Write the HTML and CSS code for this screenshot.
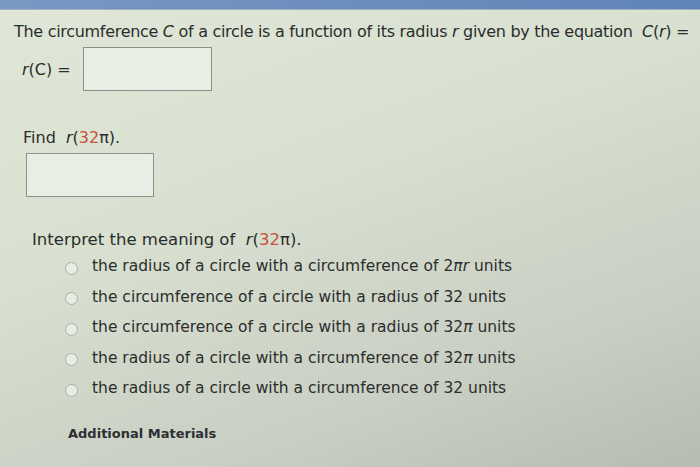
FILE: index.html
```html
<!DOCTYPE html>
<html>
<head>
<meta charset="utf-8">
<link rel="stylesheet" href="styles.css">
</head>
<body>
<div class="topbar"></div>
<div class="page">
  <p class="intro">The circumference <i>C</i> of a circle is a function of its radius <i>r</i> given by the equation&nbsp; <i>C</i>(<i>r</i>) =</p>
  <div class="eqrow">
    <span class="lbl"><i>r</i>(C) =</span>
    <div class="box box1"></div>
  </div>
  <p class="find">Find&nbsp;&nbsp;<i>r</i>(<span class="red">32</span>π).</p>
  <div class="box box2"></div>
  <p class="interp">Interpret the meaning of&nbsp; <i>r</i>(<span class="red">32</span>π).</p>
  <ul class="opts">
    <li><span class="radio"></span><span class="txt">the radius of a circle with a circumference of 2<i>πr</i> units</span></li>
    <li><span class="radio"></span><span class="txt">the circumference of a circle with a radius of 32 units</span></li>
    <li><span class="radio"></span><span class="txt">the circumference of a circle with a radius of 32<i>π</i> units</span></li>
    <li><span class="radio"></span><span class="txt">the radius of a circle with a circumference of 32<i>π</i> units</span></li>
    <li><span class="radio"></span><span class="txt">the radius of a circle with a circumference of 32 units</span></li>
  </ul>
  <p class="addl">Additional Materials</p>
</div>
</body>
</html>
```
FILE: styles.css
```css
html, body {
  margin: 0;
  padding: 0;
}
body {
  width: 700px;
  height: 467px;
  overflow: hidden;
  font-family: "DejaVu Sans", Verdana, sans-serif;
  color: #2b2d2c;
  background: linear-gradient(160deg, #e0e7d8 0%, #d8e0d0 40%, #c9cfc3 75%, #b7bcb1 100%);
}
.topbar {
  height: 9px;
  background: linear-gradient(90deg, #7a98c2, #5f84b8);
  border-bottom: 1px solid #9fb0c2;
}
.page {
  padding: 12px 0 0 14px;
}
p {
  margin: 0;
}
.intro {
  font-size: 16px;
  letter-spacing: -0.3px;
  white-space: nowrap;
}
.eqrow {
  display: flex;
  align-items: center;
  gap: 12px;
  margin-top: 6px;
  padding-left: 8px;
}
.lbl {
  font-size: 16px;
}
.box {
  background: #e9eee4;
  border: 1px solid #8b918b;
  height: 42px;
}
.box1 {
  width: 127px;
}
.find {
  font-size: 16px;
  margin-top: 37px;
  padding-left: 9px;
}
.box2 {
  width: 126px;
  margin-top: 6px;
  margin-left: 12px;
}
.interp {
  font-size: 16.5px;
  margin-top: 33px;
  padding-left: 18px;
}
.red {
  color: #c9503c;
}
.opts {
  list-style: none;
  margin: 2px 0 0 0;
  padding: 0 0 0 51px;
}
.opts li {
  display: flex;
  align-items: center;
  gap: 14px;
  height: 30.5px;
  font-size: 15.5px;
  white-space: nowrap;
}
.radio {
  width: 11px;
  height: 11px;
  border-radius: 50%;
  border: 1px solid #a9aea7;
  background: #e8ece4;
  flex: none;
  margin-top: 4px;
}
.addl {
  font-weight: bold;
  font-size: 13px;
  margin-top: 22px;
  padding-left: 54px;
  color: #2c2f33;
}
```
